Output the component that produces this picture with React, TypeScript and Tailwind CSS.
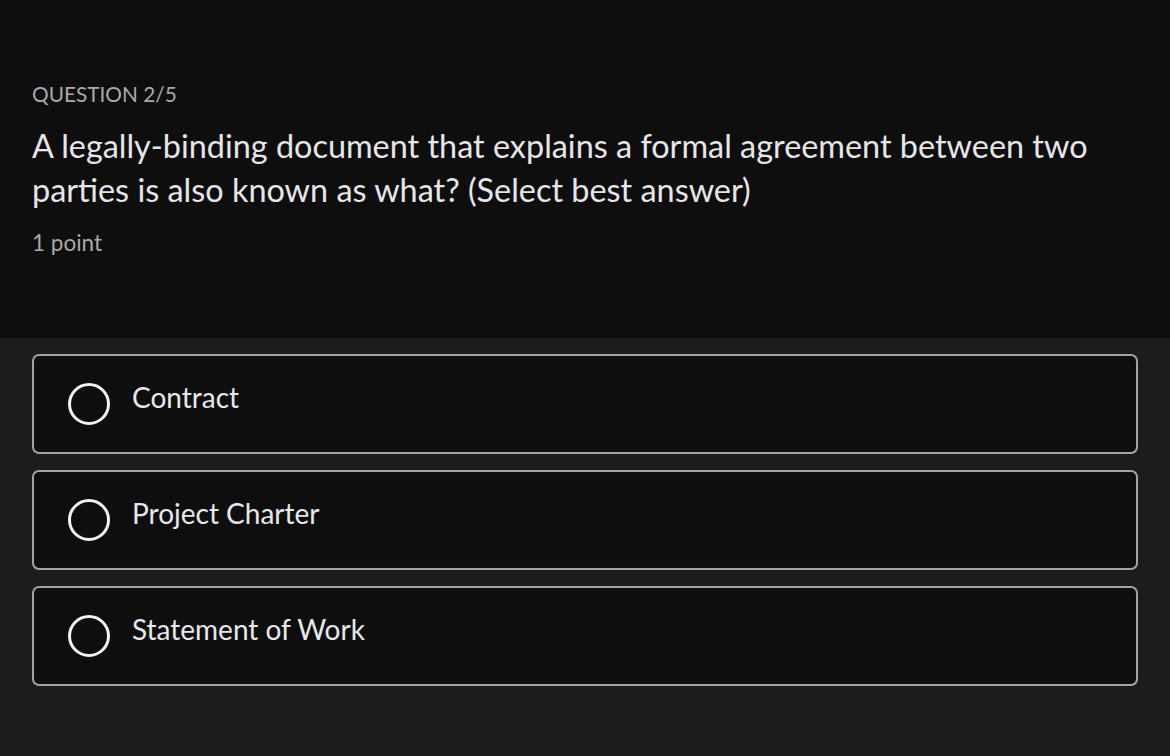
export default function App() {
  const options = ["Contract", "Project Charter", "Statement of Work"];
  return (
    <div className="w-[1170px] h-[756px] bg-[#1c1c1e] overflow-hidden" style={{ fontFamily: "Lato, 'Noto Sans', sans-serif" }}>
      <div className="h-[338px] bg-[#0e0e0f] px-[32px] pt-[78px]">
        <div className="text-[20.8px] leading-[32px] text-[#a9a9ab]">QUESTION 2/5</div>
        <div className="mt-[14px] text-[32.4px] leading-[44px] text-[#e6e6e8] w-[1100px]">
          A legally-binding document that explains a formal agreement between two parties is also known as what? (Select best answer)
        </div>
        <div className="mt-[16px] text-[22.5px] leading-[30px] text-[#a9a9ab]">1 point</div>
      </div>
      <div className="px-[32px] pt-[16px] flex flex-col gap-[16px]">
        {options.map((o) => (
          <div key={o} className="h-[100px] rounded-[7px] border-2 border-[#a3a3a7] bg-[#0e0e0e] flex items-center pl-[34px]">
            <div className="w-[42px] h-[42px] rounded-full border-[3px] border-[#f2f2f2] shrink-0" />
            <div className="ml-[22px] text-[28px] text-[#e8e8ea] -mt-[14px]">{o}</div>
          </div>
        ))}
      </div>
    </div>
  );
}
